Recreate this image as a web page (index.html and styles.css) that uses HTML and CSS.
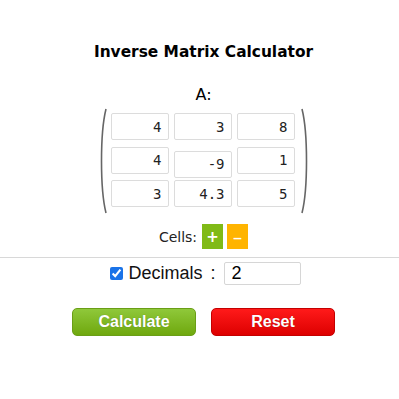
FILE: index.html
```html
<!DOCTYPE html>
<html>
<head>
<meta charset="utf-8">
<link rel="stylesheet" href="styles.css">
</head>
<body>
<div class="page">
  <h1 class="title">Inverse Matrix Calculator</h1>
  <div class="label-a">A:</div>
  <div class="matrix">
    <svg class="paren" width="9" height="106" viewBox="0 0 9 106"><path d="M7 1 C1 25 1 81 7 105" fill="none" stroke="#666" stroke-width="1.6"/></svg>
    <div class="grid">
      <input class="cell" type="text" value="4">
      <input class="cell" type="text" value="3">
      <input class="cell" type="text" value="8">
      <input class="cell" type="text" value="4">
      <input class="cell cell-low" type="text" value="-9">
      <input class="cell" type="text" value="1">
      <input class="cell" type="text" value="3">
      <input class="cell" type="text" value="4.3">
      <input class="cell" type="text" value="5">
    </div>
    <svg class="paren" width="9" height="106" viewBox="0 0 9 106"><path d="M2 1 C8 25 8 81 2 105" fill="none" stroke="#666" stroke-width="1.6"/></svg>
  </div>
  <div class="cells-row">
    <span class="cells-label">Cells:</span>
    <span class="sq sq-plus">+</span>
    <span class="sq sq-minus">–</span>
  </div>
</div>
<hr class="rule">
<div class="page">
  <div class="dec-row">
    <input class="check" type="checkbox" checked>
    <span class="dec-label">Decimals :</span>
    <input class="dec-input" type="text" value="2">
  </div>
  <div class="btn-row">
    <button class="btn btn-calc">Calculate</button>
    <button class="btn btn-reset">Reset</button>
  </div>
</div>
</body>
</html>
```
FILE: styles.css
```css
html, body {
  margin: 0;
  padding: 0;
  background: #fff;
}
body {
  font-family: "DejaVu Sans", Verdana, sans-serif;
  color: #000;
}
.page {
  padding-left: 8px;
  display: flex;
  flex-direction: column;
  align-items: center;
}
.title {
  font-size: 15.4px;
  font-weight: bold;
  margin: 42px 0 0 0;
  line-height: 20px;
}
.label-a {
  font-size: 16px;
  line-height: 20px;
  margin-top: 23px;
}
.matrix {
  display: flex;
  align-items: flex-start;
  margin-top: 1px;
}
.paren {
  display: block;
  margin-top: 2px;
}
.paren:first-child {
  margin-right: 3px;
}
.paren:last-child {
  margin-left: 5px;
}
.grid {
  display: grid;
  grid-template-columns: 58px 58px 58px;
  column-gap: 5px;
  row-gap: 6.5px;
  padding-top: 7px;
}
.cell {
  box-sizing: border-box;
  width: 58px;
  height: 27px;
  border: 1px solid #dcdcdc;
  border-radius: 2px;
  background: #fff;
  font-family: "DejaVu Sans Mono", "Liberation Mono", monospace;
  font-size: 14px;
  color: #222;
  text-align: right;
  padding: 0 6px 0 0;
  margin: 0;
  outline: none;
}
.cell-low {
  margin-top: 4px;
  margin-bottom: -4px;
}
.cells-row {
  display: flex;
  align-items: center;
  margin-top: 10px;
  height: 25px;
}
.cells-label {
  font-size: 14px;
  color: #222;
  margin-right: 5px;
}
.sq {
  width: 21px;
  height: 25px;
  display: flex;
  align-items: center;
  justify-content: center;
  color: #fff;
  font-size: 15px;
  font-weight: bold;
}
.sq-plus {
  background: #80ba17;
  margin-right: 4px;
}
.sq-minus {
  background: #ffb400;
  font-weight: normal;
  font-size: 19px;
}
.rule {
  border: 0;
  border-top: 1px solid #d8d8d8;
  margin: 8px 0 0 0;
  height: 0;
}
.dec-row {
  display: flex;
  align-items: center;
  margin-top: 4px;
  margin-left: 4px;
}
.check {
  width: 13px;
  height: 13px;
  margin: 0 5px 0 0;
  accent-color: #1a73e8;
}
.dec-label {
  font-family: "Liberation Sans", Arial, sans-serif;
  font-size: 18px;
  color: #111;
  margin-right: 8px;
  word-spacing: 3px;
}
.dec-input {
  box-sizing: border-box;
  width: 77px;
  height: 23px;
  border: 1px solid #d6d6d6;
  border-radius: 2px;
  font-family: "Liberation Sans", Arial, sans-serif;
  font-size: 18px;
  padding: 0 0 0 7px;
  margin: 0;
  outline: none;
}
.btn-row {
  display: flex;
  gap: 15px;
  margin-top: 23px;
}
.btn {
  box-sizing: border-box;
  width: 124px;
  height: 28px;
  border-radius: 5px;
  font-family: "Liberation Sans", Arial, sans-serif;
  font-weight: bold;
  font-size: 16px;
  color: #fff;
  padding: 0;
  text-shadow: 0 0 1px rgba(0,0,0,0.3);
}
.btn-calc {
  background: linear-gradient(#8fc83a, #6fa80e);
  border: 1px solid #6a9e16;
}
.btn-reset {
  background: linear-gradient(#ff1a1a, #dd0000);
  border: 1px solid #c40000;
}
```
